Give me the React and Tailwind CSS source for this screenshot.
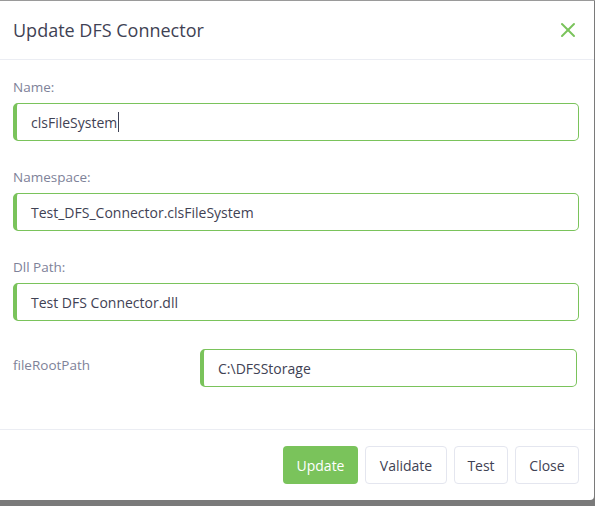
import { X } from "lucide-react";

const font = { fontFamily: "'Open Sans', 'Noto Sans', sans-serif" };

function Field({ label, value, caret }) {
  return (
    <div className="flex flex-col">
      <label className="text-[13.5px] leading-[18px] text-[#7e8299] mb-[7px]">{label}</label>
      <div className="h-[38px] flex items-center border border-[#7ac35b] border-l-[4px] rounded-[5px] pl-[14px] text-[14px] text-[#3f4254]">
        {value}
        {caret && <span className="inline-block w-px h-[20px] bg-[#3f4254] ml-px" />}
      </div>
    </div>
  );
}

function Btn({ children, primary, w }) {
  return (
    <button
      className={
        (primary
          ? "h-[38px] rounded-[4px] bg-[#7ac35b] text-white text-[14px] "
          : "h-[38px] rounded-[4px] border border-[#e4e6ef] bg-white text-[#3f4254] text-[14px] ") + w
      }
    >
      {children}
    </button>
  );
}

export default function App() {
  return (
    <div className="w-[595px] h-[506px] bg-[#7a7a7a] overflow-hidden" style={font}>
      <div className="h-px bg-[#9a9a9a]" />
      <div className="w-[594px] h-[499px] bg-white rounded-br-[4px] flex flex-col">
        {/* header */}
        <div className="h-[59px] flex items-center justify-between pl-[13px] pr-[14px] border-b border-[#ebedf3]">
          <h2 className="text-[18px] text-[#3f4254] font-medium">Update DFS Connector</h2>
          <X className="w-[24px] h-[24px] text-[#7ac35b]" strokeWidth={2} />
        </div>

        {/* body */}
        <div className="flex-1 px-[13px] pr-[15px] pt-[18px] flex flex-col gap-[27px] border-b border-[#ebedf3]">
          <Field label="Name:" value="clsFileSystem" caret />
          <Field label="Namespace:" value="Test_DFS_Connector.clsFileSystem" />
          <Field label="Dll Path:" value="Test DFS Connector.dll" />
          <div className="flex items-start mt-px">
            <div className="w-[187px] pt-[6px] text-[13.5px] text-[#7e8299]">fileRootPath</div>
            <div className="flex-1 mr-[2px] h-[38px] flex items-center border border-[#7ac35b] border-l-[4px] rounded-[5px] pl-[14px] text-[14px] text-[#3f4254]">
              C:\DFSStorage
            </div>
          </div>
        </div>

        {/* footer */}
        <div className="h-[70px] flex items-start justify-end gap-[7px] pt-[16px] pr-[15px]">
          <Btn primary w="w-[75px]">Update</Btn>
          <Btn w="w-[82px]">Validate</Btn>
          <Btn w="w-[54px]">Test</Btn>
          <Btn w="w-[64px]">Close</Btn>
        </div>
      </div>
    </div>
  );
}
